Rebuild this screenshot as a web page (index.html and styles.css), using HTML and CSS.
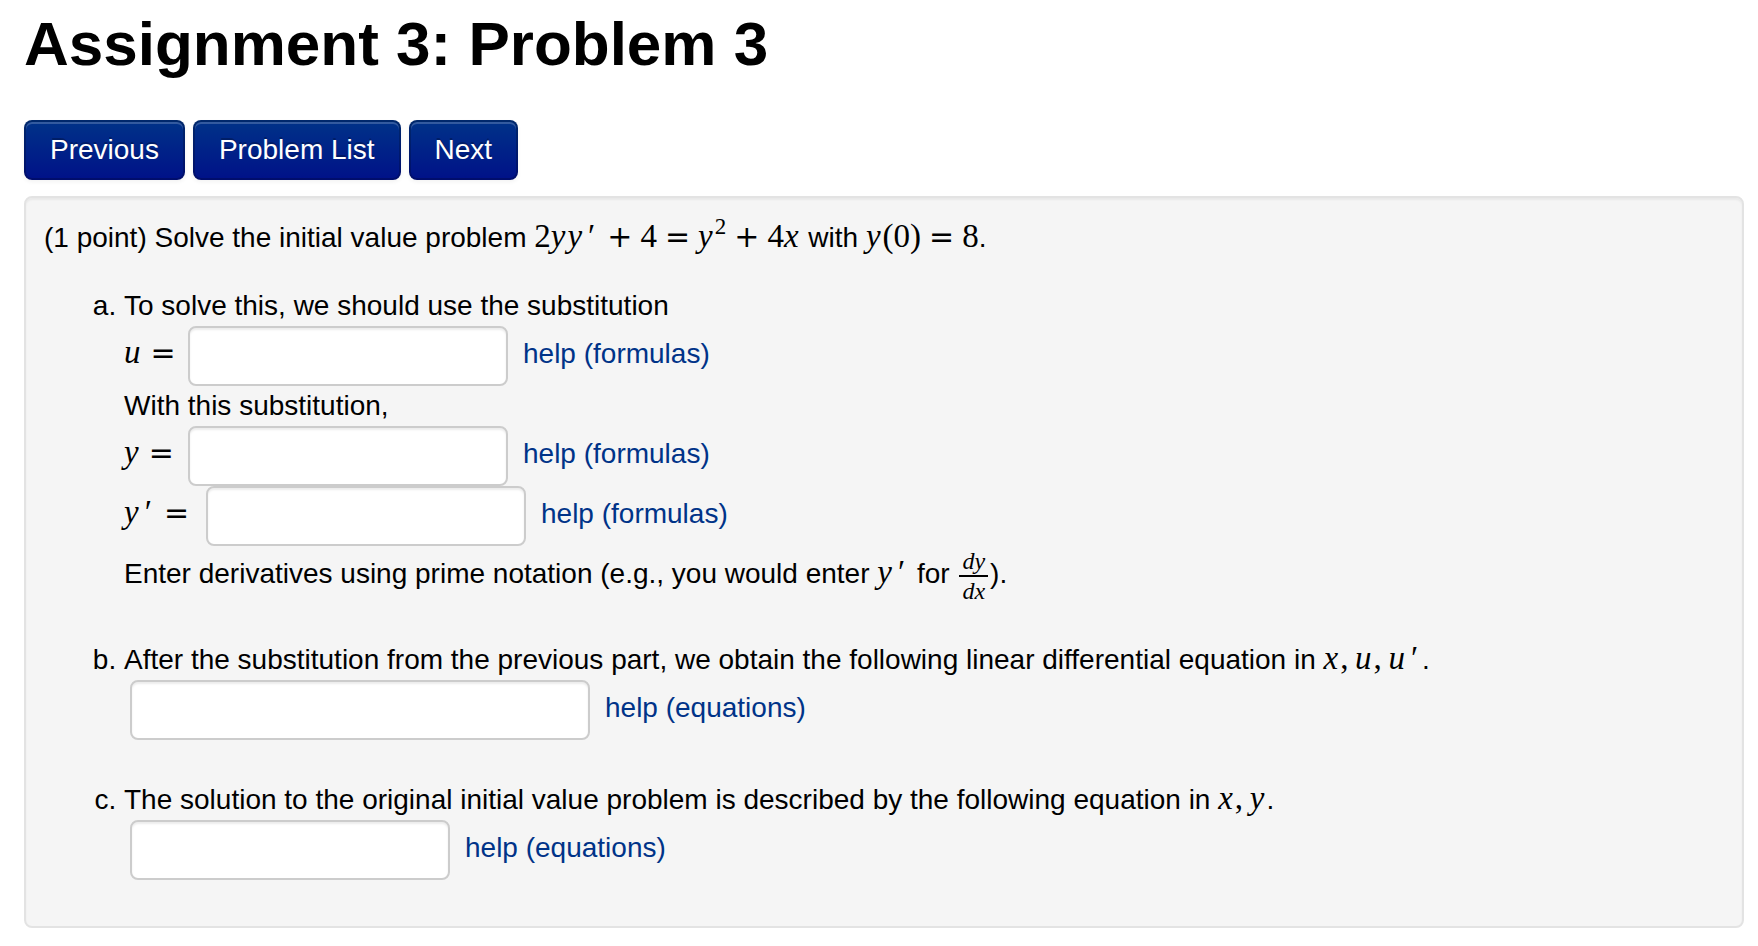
FILE: index.html
```html
<!DOCTYPE html>
<html lang="en">
<head>
    <meta charset="UTF-8">
    <meta name="viewport" content="width=device-width, initial-scale=1.0">
    <title>Assignment 3: Problem 3</title>
    <link rel="stylesheet" href="styles.css">
</head>
<body>

    <h1>Assignment 3: Problem 3</h1>

    <nav class="nav-buttons">
        <button type="button">Previous</button>
        <button type="button">Problem List</button>
        <button type="button">Next</button>
    </nav>

    <form class="problem">
        <p>(1 point) Solve the initial value problem <span class="math">2<i>y</i><i>y</i><span class="prime">′</span><span class="op">+</span>4<span class="op">=</span><i>y</i><sup>2</sup><span class="op">+</span>4<i>x</i></span> with <span class="math"><i>y</i>(0)<span class="op">=</span>8</span>.</p>

        <ol class="parts">
            <li>
                <p>To solve this, we should use the substitution</p>
                <div class="answer">
                    <label class="math" for="ans1"><i>u</i><span class="op">=</span></label><input type="text" id="ans1"><a href="#">help (formulas)</a>
                </div>
                <p>With this substitution,</p>
                <div class="answer">
                    <label class="math" for="ans2"><i>y</i><span class="op">=</span></label><input type="text" id="ans2"><a href="#">help (formulas)</a>
                </div>
                <div class="answer">
                    <label class="math wide" for="ans3"><i>y</i><span class="prime">′</span><span class="op">=</span></label><input type="text" id="ans3"><a href="#">help (formulas)</a>
                </div>
                <p class="note">Enter derivatives using prime notation (e.g., you would enter <span class="math"><i>y</i><span class="prime">′</span></span> for <span class="math frac"><i>dy</i><i>dx</i></span>).</p>
            </li>
            <li>
                <p id="part-b">After the substitution from the previous part, we obtain the following linear differential equation in <span class="math"><i>x</i>,&thinsp;<i>u</i>,&thinsp;<i>u</i><span class="prime">′</span></span>.</p>
                <div class="answer indent">
                    <input type="text" class="long" aria-labelledby="part-b"><a href="#">help (equations)</a>
                </div>
            </li>
            <li>
                <p id="part-c">The solution to the original initial value problem is described by the following equation in <span class="math"><i>x</i>,&thinsp;<i>y</i></span>.</p>
                <div class="answer indent">
                    <input type="text" aria-labelledby="part-c"><a href="#">help (equations)</a>
                </div>
            </li>
        </ol>
    </form>

</body>
</html>
```
FILE: styles.css
```css
*{
    box-sizing: border-box;
    padding: 0;
    margin: 0;
}
body{
    background: #fff;
    color: #000;
    padding: 4px 14px 18px 24px;
    font: 28px/40px "Helvetica Neue", "Liberation Sans", Arial, sans-serif;
}
h1{
    font-size: 62px;
    line-height: 80px;
    margin-bottom: 36px;
}
a{
    color: #038;
    text-decoration: none;
}
a:hover{
    text-decoration: underline;
}

.nav-buttons{
    display: flex;
    gap: 8px;
    margin-bottom: 16px;
}
button{
    color: #fff;
    font: inherit;
    padding: 8px 24px;
    border: 2px solid rgba(0,0,0,.2);
    border-radius: 8px;
    background: linear-gradient(#038, #018) border-box;
    box-shadow: inset 0 2px 0 rgba(255,255,255,.2), 0 2px 4px rgba(0,0,0,.05);
    text-shadow: 0 -2px 0 rgba(0,0,0,.25);
    cursor: pointer;
}

.problem{
    background: #f5f5f5;
    border: 2px solid #e3e3e3;
    border-radius: 8px;
    box-shadow: inset 0 2px 2px rgba(0,0,0,.05);
    padding: 20px 18px;
}
.parts{
    list-style: lower-alpha;
    margin: 28px 0 26px;
    padding-left: 80px;
}
.parts li + li{
    margin-top: 40px;
}
.note{
    padding: 8px 0 6px;
}

.answer label{
    display: inline-block;
    width: 64px;
}
.answer label.wide{
    width: 82px;
}
.answer a{
    margin-left: 15px;
}
.indent{
    padding-left: 6px;
}
input{
    width: 320px;
    height: 60px;
    padding: 8px 12px;
    border: 2px solid #ccc;
    border-radius: 8px;
    background: #fff;
    box-shadow: inset 0 2px 2px rgba(0,0,0,.075);
    font: inherit;
    vertical-align: middle;
}
input.long{
    width: 460px;
}

/* math */
.math{
    font-family: "Liberation Serif", "Times New Roman", serif;
    font-size: 33px;
    line-height: 0;
    white-space: nowrap;
}
.math i{
    margin-right: 2px;
}
.op{
    font-family: "DejaVu Sans", sans-serif;
    font-size: 30px;
    margin: 0 8px;
}
.prime{
    margin: 0 4px;
}
.math sup{
    font-size: 23px;
    vertical-align: 13px;
}
.frac{
    display: inline-flex;
    flex-direction: column;
    vertical-align: middle;
    margin: -14px 2px;
    font-size: 24px;
    line-height: 28px;
    text-align: center;
}
.math.frac i{
    margin: 0;
    padding: 0 3px;
}
.frac i + i{
    border-top: 2px solid #000;
}
```
